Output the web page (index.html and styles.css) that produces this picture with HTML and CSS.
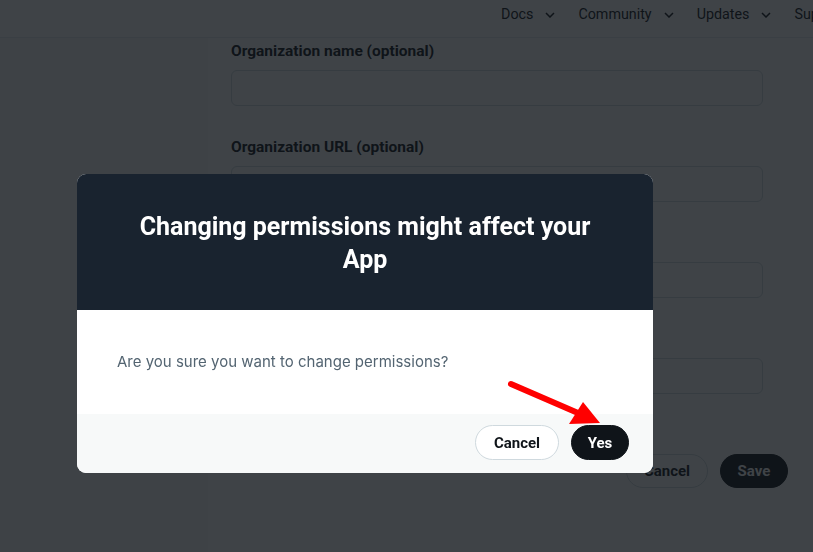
FILE: index.html
```html
<!DOCTYPE html>
<html lang="en">
<head>
<meta charset="utf-8">
<title>Change permissions</title>
<link rel="stylesheet" href="styles.css">
</head>
<body>
<header class="topbar">
  <nav class="nav">
    <span class="nav-item">Docs <svg class="chev" viewBox="0 0 10 6"><path d="M1 1l4 4 4-4"/></svg></span>
    <span class="nav-item">Community <svg class="chev" viewBox="0 0 10 6"><path d="M1 1l4 4 4-4"/></svg></span>
    <span class="nav-item">Updates <svg class="chev" viewBox="0 0 10 6"><path d="M1 1l4 4 4-4"/></svg></span>
    <span class="nav-item">Support <svg class="chev" viewBox="0 0 10 6"><path d="M1 1l4 4 4-4"/></svg></span>
  </nav>
</header>
<div class="layout">
  <aside class="sidebar"></aside>
  <main class="content">
    <div class="field">
      <label class="label">Organization name (optional)</label>
      <div class="input"></div>
    </div>
    <div class="field">
      <label class="label">Organization URL (optional)</label>
      <div class="input"></div>
    </div>
    <div class="field field-blank">
      <div class="input"></div>
    </div>
    <div class="field field-blank">
      <div class="input"></div>
    </div>
    <div class="actions">
      <button class="btn btn-outline btn-page-cancel">Cancel</button>
      <button class="btn btn-dark btn-save">Save</button>
    </div>
  </main>
</div>

<div class="overlay"></div>

<div class="modal">
  <div class="modal-head">
    <h2 class="modal-title">Changing permissions might affect your App</h2>
  </div>
  <div class="modal-body">
    <p class="modal-text">Are you sure you want to change permissions?</p>
  </div>
  <div class="modal-foot">
    <button class="btn btn-outline btn-cancel">Cancel</button>
    <button class="btn btn-dark btn-yes">Yes</button>
  </div>
</div>

<svg class="annotation" viewBox="0 0 813 552" width="813" height="552">
  <line x1="511" y1="384" x2="578" y2="413" stroke="#ff0000" stroke-width="6" stroke-linecap="round"/>
  <polygon points="569,424 583,402 600,423" fill="#ff0000"/>
</svg>
</body>
</html>
```
FILE: styles.css
```css
* { box-sizing: border-box; }
html, body { margin: 0; padding: 0; }
body {
  background: #ffffff;
  font-family: Roboto, "Liberation Sans", Arial, sans-serif;
  color: #0f1419;
  width: 813px;
  height: 552px;
  overflow: hidden;
}

.topbar {
  height: 38px;
  border-bottom: 1px solid #e7ecee;
  overflow: hidden;
}
.nav {
  display: flex;
  gap: 23px;
  padding-left: 501px;
  padding-top: 4px;
  white-space: nowrap;
}
.nav-item {
  display: flex;
  align-items: center;
  gap: 12px;
  font-size: 14.3px;
  line-height: 20px;
  color: #0f1419;
  flex: none;
}
.chev {
  width: 10px;
  height: 6px;
  fill: none;
  stroke: #0f1419;
  stroke-width: 1.5;
  margin-top: 2px;
}

.layout {
  display: flex;
  height: 514px;
}
.sidebar {
  width: 208px;
  flex: none;
  background: #fbfbfb;
}
.content {
  width: 580px;
  padding: 3px 0 0 23px;
}
.field {
  margin-bottom: 31px;
}
.field-blank {
  padding-top: 29px;
}
.label {
  display: block;
  font-weight: 700;
  font-size: 15.5px;
  line-height: 20px;
  color: #0f1419;
  margin-bottom: 9px;
}
.input {
  height: 36px;
  width: 532px;
  border: 1px solid #cfd9de;
  border-radius: 6px;
  background: #fff;
}
.actions {
  display: flex;
  justify-content: flex-end;
  gap: 12px;
  margin-top: 60px;
}

.btn {
  font-family: Roboto, "Liberation Sans", Arial, sans-serif;
  font-weight: 700;
  font-size: 15px;
  border-radius: 9999px;
  padding: 0;
  cursor: pointer;
}
.btn-outline {
  background: #fff;
  border: 1px solid #cfd9de;
  color: #0f1419;
}
.btn-dark {
  background: #0f1419;
  border: 1px solid #0f1419;
  color: #fff;
}
.btn-page-cancel { width: 82px; height: 34px; }
.btn-save { width: 68px; height: 34px; }

.overlay {
  position: fixed;
  inset: 0;
  background: rgba(15, 20, 25, 0.8);
}

.modal {
  position: fixed;
  left: 77px;
  top: 174px;
  width: 576px;
  border-radius: 9px;
  overflow: hidden;
  background: #fff;
}
.modal-head {
  background: #19232f;
  padding: 36px 56px 0;
  height: 136px;
}
.modal-title {
  margin: 0;
  color: #fff;
  text-align: center;
  font-weight: 700;
  font-size: 25px;
  line-height: 33px;
}
.modal-body {
  height: 104px;
  padding: 42px 40px 0;
}
.modal-text {
  margin: 0;
  font-family: Inter, "Noto Sans", sans-serif;
  font-size: 15px;
  line-height: 20px;
  color: #536471;
}
.modal-foot {
  background: #f7f9f9;
  height: 59px;
  display: flex;
  justify-content: flex-end;
  align-items: flex-start;
  gap: 12px;
  padding: 11px 24px 0 0;
}
.btn-cancel { width: 84px; height: 35px; }
.btn-yes { width: 58px; height: 35px; }

.annotation {
  position: fixed;
  left: 0;
  top: 0;
  pointer-events: none;
}
```
